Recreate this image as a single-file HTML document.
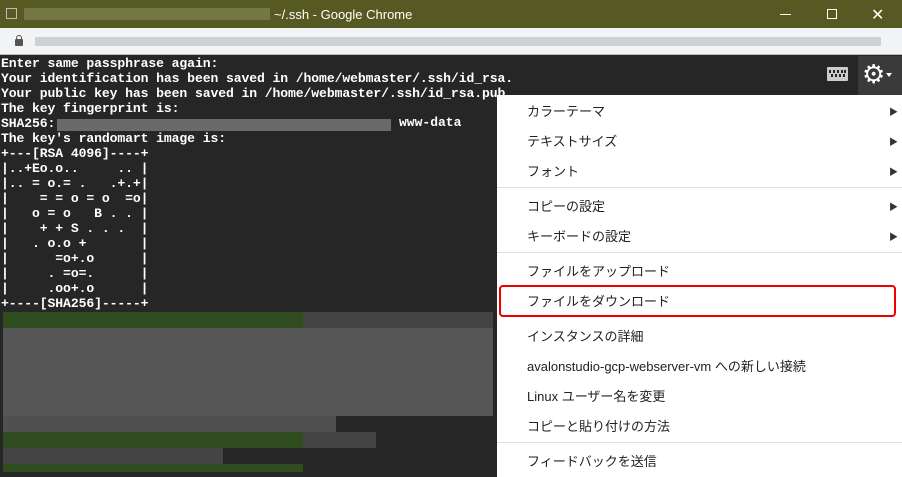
<!DOCTYPE html>
<html><head><meta charset="utf-8"><style>
*{margin:0;padding:0;box-sizing:border-box}
body{width:902px;height:477px;overflow:hidden;background:#262626;position:relative;font-family:"Liberation Sans","Noto Sans CJK JP",sans-serif}
.title{position:absolute;left:0;top:0;width:902px;height:28px;background:#565a22;color:#fff;font-size:13px}
.addr{position:absolute;left:0;top:28px;width:902px;height:27px;background:#f1f3f4;border-bottom:1px solid #bbb}
.term{position:absolute;left:1px;top:56px;font-family:"Liberation Mono",monospace;font-size:13.1px;line-height:15px;color:#fff;white-space:pre;font-weight:bold;letter-spacing:-0.1px}
.blk{position:absolute}
.menu{position:absolute;left:497px;top:95px;width:405px;height:382px;background:#fff;font-size:13px;color:#222}
.it{position:absolute;left:30px}
.ar{position:absolute;right:4px;font-size:9px;color:#333}
.sep{position:absolute;left:0;width:405px;height:1px;background:#e0e0e0}
</style></head><body>
<div class="title">
<div style="position:absolute;left:6px;top:8px;width:11px;height:11px;border:1px solid #bbb"></div>
<div style="position:absolute;left:24px;top:8px;width:246px;height:12px;background:#7a7e4c;opacity:.8"></div>
<div style="position:absolute;left:274px;top:7px">~/.ssh - Google Chrome</div>
<div style="position:absolute;left:780px;top:14px;width:11px;height:1px;background:#fff"></div>
<div style="position:absolute;left:827px;top:9px;width:10px;height:10px;border:1px solid #fff"></div>
<div style="position:absolute;left:871px;top:5px;font-size:16px">✕</div>
</div>
<div class="addr">
<div style="position:absolute;left:15px;top:11px;width:8px;height:7px;background:#555;border-radius:1px"></div>
<div style="position:absolute;left:16px;top:7px;width:6px;height:6px;border:1.5px solid #555;border-bottom:none;border-radius:3px 3px 0 0"></div>
<div style="position:absolute;left:35px;top:9px;width:846px;height:9px;background:#cdd0d4"></div>
</div>
<div class="term">Enter same passphrase again:
Your identification has been saved in /home/webmaster/.ssh/id_rsa.
Your public key has been saved in /home/webmaster/.ssh/id_rsa.pub
The key fingerprint is:
SHA256:
The key's randomart image is:
+---[RSA 4096]----+
|..+Eo.o..     .. |
|.. = o.= .   .+.+|
|    = = o = o  =o|
|   o = o   B . . |
|    + + S . . .  |
|   . o.o +       |
|      =o+.o      |
|     . =o=.      |
|     .oo+.o      |
+----[SHA256]-----+</div>
<div class="blk" style="left:57px;top:119px;width:334px;height:12px;background:#6a6a6a"></div>
<div class="blk" style="left:399px;top:115px;color:#fff;font-family:'Liberation Mono',monospace;font-weight:bold;font-size:13px">www-data</div>
<div class="blk" style="left:3px;top:312px;width:300px;height:16px;background:#2f4d1f"></div>
<div class="blk" style="left:303px;top:312px;width:190px;height:16px;background:#444"></div>
<div class="blk" style="left:3px;top:328px;width:490px;height:88px;background:#555"></div>
<div class="blk" style="left:3px;top:416px;width:333px;height:16px;background:#505050"></div>
<div class="blk" style="left:3px;top:432px;width:300px;height:16px;background:#2f4d1f"></div>
<div class="blk" style="left:303px;top:432px;width:73px;height:16px;background:#444"></div>
<div class="blk" style="left:3px;top:448px;width:220px;height:16px;background:#444"></div>
<div class="blk" style="left:3px;top:464px;width:300px;height:8px;background:#2f4d1f"></div>
<div class="blk" style="left:858px;top:56px;width:44px;height:39px;background:#3a3a3a"></div>
<div class="blk" style="left:827px;top:67px;width:21px;height:14px;background:#ccc;border-radius:1px"></div>
<div class="blk" style="left:829px;top:70px;width:17px;height:3px;border-left:2px solid #262626;border-right:2px solid #262626;background:repeating-linear-gradient(90deg,#ccc 0 2px,#262626 2px 4px)"></div>
<div class="blk" style="left:829px;top:74px;width:17px;height:3px;background:repeating-linear-gradient(90deg,#ccc 0 2px,#262626 2px 4px)"></div>
<div class="blk" style="left:862px;top:59px;color:#fff;font-size:26px;line-height:30px">⚙</div>
<div class="blk" style="left:886px;top:73px;width:0;height:0;border-left:3px solid transparent;border-right:3px solid transparent;border-top:4px solid #fff"></div>
<div class="menu">
<div class="it" style="top:6px">カラーテーマ</div><div class="ar" style="top:10px">▶</div>
<div class="it" style="top:36px">テキストサイズ</div><div class="ar" style="top:40px">▶</div>
<div class="it" style="top:66px">フォント</div><div class="ar" style="top:70px">▶</div>
<div class="sep" style="top:92px"></div>
<div class="it" style="top:101px">コピーの設定</div><div class="ar" style="top:105px">▶</div>
<div class="it" style="top:131px">キーボードの設定</div><div class="ar" style="top:135px">▶</div>
<div class="sep" style="top:157px"></div>
<div class="it" style="top:166px">ファイルをアップロード</div>
<div style="position:absolute;left:2px;top:190px;width:397px;height:32px;border:2px solid #e00;border-radius:4px"></div>
<div class="it" style="top:196px">ファイルをダウンロード</div>
<div class="it" style="top:231px">インスタンスの詳細</div>
<div class="it" style="top:261px">avalonstudio-gcp-webserver-vm への新しい接続</div>
<div class="it" style="top:291px">Linux ユーザー名を変更</div>
<div class="it" style="top:321px">コピーと貼り付けの方法</div>
<div class="sep" style="top:347px"></div>
<div class="it" style="top:356px">フィードバックを送信</div>
</div>
</body></html>
